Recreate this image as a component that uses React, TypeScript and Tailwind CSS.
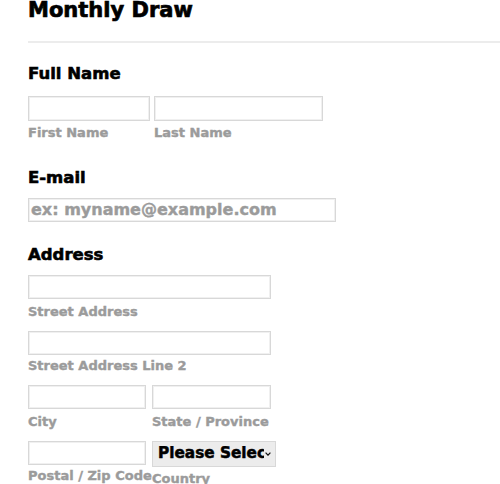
import React from "react";

const heavy = { fontFamily: "'DejaVu Sans', 'Liberation Sans', Arial, sans-serif" };

function Field({ w, h = "h-[24px]" }: { w: string; h?: string }) {
  return (
    <div
      className={`${w} ${h} border border-[#d8d8d8] bg-white shadow-[inset_0_0_0_1px_#f0f0f0]`}
    />
  );
}

function Sub({ children, className = "" }: { children: React.ReactNode; className?: string }) {
  return (
    <div
      className={`text-[13px] leading-[16px] font-bold text-[#9b9b9b] [-webkit-text-stroke:0.4px] whitespace-nowrap ${className}`}
    >
      {children}
    </div>
  );
}

function Heading({ children, className = "" }: { children: React.ReactNode; className?: string }) {
  return (
    <div className={`text-[16.5px] leading-[20px] font-bold text-black [-webkit-text-stroke:0.6px] ${className}`}>
      {children}
    </div>
  );
}

export default function App() {
  return (
    <div className="w-[500px] h-[484px] overflow-hidden bg-white" style={heavy}>
      <div className="pl-[28px]">
        <h1 className="text-[21px] leading-[20px] font-bold text-black [-webkit-text-stroke:0.7px]">Monthly Draw</h1>
        <div className="mt-[21px] h-[2px] bg-[#ececec]" />

        <Heading className="mt-[21px]">Full Name</Heading>
        <div className="mt-[12px] flex gap-[4px]">
          <div className="w-[122px] flex flex-col gap-[4px]">
            <Field w="w-[122px]" h="h-[25px]" />
            <Sub>First Name</Sub>
          </div>
          <div className="w-[169px] flex flex-col gap-[4px]">
            <Field w="w-[169px]" h="h-[25px]" />
            <Sub>Last Name</Sub>
          </div>
        </div>

        <Heading className="mt-[27px]">E-mail</Heading>
        <div className="mt-[10px] w-[308px] h-[24px] border border-[#d8d8d8] shadow-[inset_0_0_0_1px_#f0f0f0] flex items-center pl-[2px]">
          <span className="text-[16px] font-bold text-[#9b9b9b] [-webkit-text-stroke:0.4px] leading-none whitespace-nowrap">
            ex: myname@example.com
          </span>
        </div>

        <Heading className="mt-[23px]">Address</Heading>
        <div className="mt-[10px] flex flex-col gap-[5px]">
          <Field w="w-[243px]" />
          <Sub>Street Address</Sub>
        </div>
        <div className="mt-[11px] flex flex-col gap-[3px]">
          <Field w="w-[243px]" />
          <Sub>Street Address Line 2</Sub>
        </div>
        <div className="mt-[11px] flex gap-[6px]">
          <div className="w-[118px] flex flex-col gap-[5px]">
            <Field w="w-[118px]" />
            <Sub>City</Sub>
          </div>
          <div className="w-[119px] flex flex-col gap-[5px]">
            <Field w="w-[119px]" />
            <Sub>State / Province</Sub>
          </div>
        </div>
        <div className="mt-[11px] flex gap-[6px] items-start">
          <div className="w-[118px] flex flex-col gap-[3px]">
            <Field w="w-[118px]" />
            <Sub>Postal / Zip Code</Sub>
          </div>
          <div className="w-[124px] flex flex-col gap-[3px]">
            <div className="w-[124px] h-[26px] border border-[#d8d8d8] bg-[#ececec] flex items-center pl-[5px] pr-[4px]">
              <span className="text-[15.3px] font-bold text-black [-webkit-text-stroke:0.5px] leading-none whitespace-nowrap overflow-hidden flex-1">
                Please Select
              </span>
              <svg width="6" height="4" viewBox="0 0 6 4" className="shrink-0 ml-[1px]">
                <path d="M0.6 0.6 L3 3.2 L5.4 0.6" fill="none" stroke="#111" strokeWidth="1.2" />
              </svg>
            </div>
            <Sub className="mt-[1px]">Country</Sub>
          </div>
        </div>
      </div>
    </div>
  );
}
